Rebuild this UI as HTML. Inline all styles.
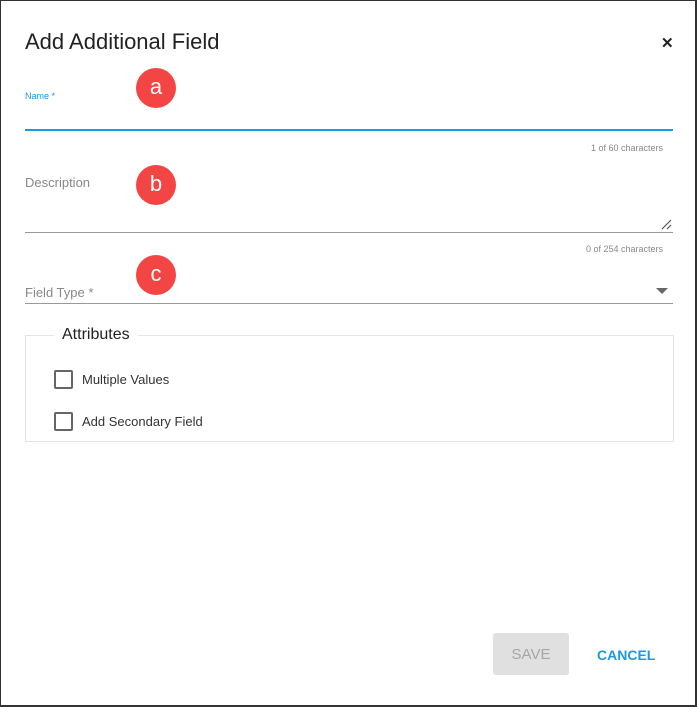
<!DOCTYPE html>
<html><head><meta charset="utf-8"><style>
*{margin:0;padding:0;box-sizing:border-box}
body{width:697px;height:707px;background:#fff;font-family:"Liberation Sans",sans-serif;position:relative;overflow:hidden}
.frame{position:absolute;left:0;top:0;width:697px;height:707px;border:1px solid #333;border-right-width:2px;border-bottom-width:2px}
.a{position:absolute;white-space:nowrap}
.c{position:absolute;width:40px;height:40px;border-radius:50%;background:#f44545;color:#fff;font-size:22px;text-align:center;line-height:38px}
.line{position:absolute;left:25px;width:648px}
.cb{position:absolute;left:54px;width:19px;height:19px;border:2px solid #666;border-radius:2px}
</style></head><body>
<div class="frame"></div>
<div class="a" style="left:25px;top:29px;font-size:22px;color:#222">Add Additional Field</div>
<div class="a" style="left:661px;top:34px;font-size:15px;font-weight:bold;color:#222">✕</div>
<div class="c" style="left:136px;top:68px">a</div>
<div class="c" style="left:136px;top:165px">b</div>
<div class="c" style="left:136px;top:255px">c</div>
<div class="a" style="left:25px;top:91px;font-size:9px;color:#1a9be0">Name *</div>
<div class="line" style="top:129px;height:2px;background:#1a9be0"></div>
<div class="a" style="right:34px;top:143px;font-size:9px;color:#888">1 of 60 characters</div>
<div class="a" style="left:25px;top:175px;font-size:13px;color:#888">Description</div>
<svg class="a" style="left:660px;top:219px" width="12" height="11"><path d="M2 10L11 1M7 10L11 6" stroke="#555" stroke-width="1.2"/></svg>
<div class="line" style="top:232px;height:1px;background:#999"></div>
<div class="a" style="right:34px;top:244px;font-size:9px;color:#888">0 of 254 characters</div>
<div class="a" style="left:25px;top:285px;font-size:13px;color:#888">Field Type *</div>
<svg class="a" style="left:656px;top:288px" width="13" height="7"><path d="M0 0H12L6 6Z" fill="#666"/></svg>
<div class="line" style="top:303px;height:1px;background:#999"></div>
<div class="a" style="left:25px;top:335px;width:649px;height:107px;border:1px solid #e4e4e4"></div>
<div class="a" style="left:54px;top:326px;background:#fff;padding:0 8px;font-size:16px;color:#222">Attributes</div>
<div class="cb" style="top:370px"></div>
<div class="a" style="left:82px;top:372px;font-size:13px;color:#333">Multiple Values</div>
<div class="cb" style="top:412px"></div>
<div class="a" style="left:82px;top:414px;font-size:13px;color:#333">Add Secondary Field</div>
<div class="a" style="left:493px;top:633px;width:76px;height:42px;background:#e0e0e0;border-radius:3px;color:#a6a6a6;font-size:15px;text-align:center;line-height:44px">SAVE</div>
<div class="a" style="left:597px;top:647px;font-size:14px;font-weight:bold;color:#1a9be0">CANCEL</div>
</body></html>
